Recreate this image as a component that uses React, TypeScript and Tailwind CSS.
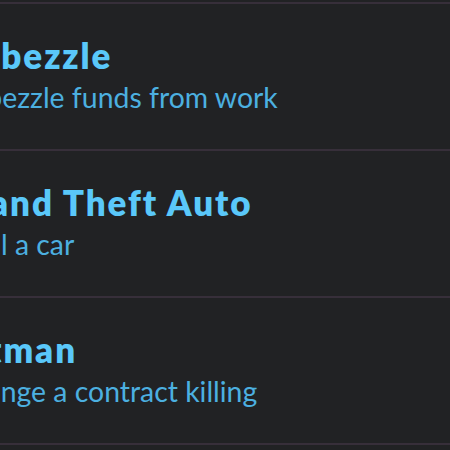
type Item = { title: string; subtitle: string }

const items: Item[] = [
  { title: "Embezzle", subtitle: "Embezzle funds from work" },
  { title: "Grand Theft Auto", subtitle: "Steal a car" },
  { title: "Hitman", subtitle: "Arrange a contract killing" },
]

export default function App() {
  return (
    <div className="h-[450px] w-[450px] overflow-hidden bg-[#212224] font-['Lato',sans-serif]">
      <div className="mt-[2px] border-t-2 border-[#372f3a]">
        {items.map(item => (
          <Row key={item.title} item={item} />
        ))}
      </div>
    </div>
  )
}

function Row({ item }: { item: Item }) {
  return (
    <div className="h-[147px] border-b-2 border-[#372f3a] pt-[31px]">
      <div className="ml-[-53px] whitespace-nowrap">
        <p className="ml-[1px] text-[35px] font-extrabold leading-[40px] tracking-[1.9px] text-[#5ac8fa]">
          {item.title}
        </p>
        <p className="mt-[4px] text-[28.4px] leading-[36px] text-[#4cb0e0]">{item.subtitle}</p>
      </div>
    </div>
  )
}
